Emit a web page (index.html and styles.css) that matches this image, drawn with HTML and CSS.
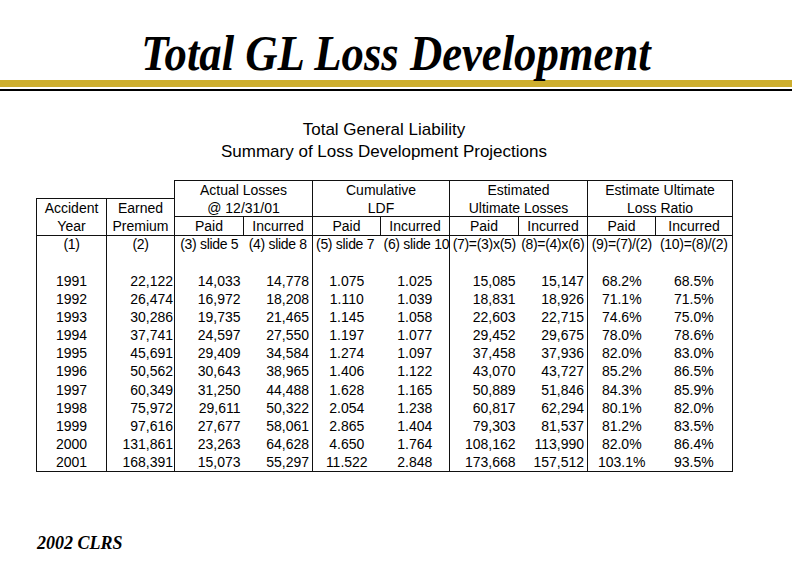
FILE: index.html
```html
<!DOCTYPE html>
<html lang="en">
<head>
<meta charset="utf-8">
<title>Total GL Loss Development</title>
<link rel="stylesheet" href="styles.css">
</head>
<body>
<div class="slide">
  <header class="head">
    <h1 class="title">Total GL Loss Development</h1>
    <div class="rule-gold"></div>
    <div class="rule-black"></div>
  </header>

  <section class="sheet">
    <p class="caption">Total General Liability<br>Summary of Loss Development Projections</p>
    <table class="grid">
      <colgroup>
        <col class="c70"><col class="c68"><col class="c69"><col class="c69"><col class="c68">
        <col class="c69"><col class="c69"><col class="c69"><col class="c68"><col class="c77">
      </colgroup>
      <thead>
        <tr>
          <td colspan="2" class="blank"></td>
          <td colspan="2" class="bt bl">Actual Losses</td>
          <td colspan="2" class="bt bl">Cumulative</td>
          <td colspan="2" class="bt bl">Estimated</td>
          <td colspan="2" class="bt bl br">Estimate Ultimate</td>
        </tr>
        <tr>
          <td class="bt bl">Accident</td>
          <td class="bt bl">Earned</td>
          <td colspan="2" class="bl bb">@ 12/31/01</td>
          <td colspan="2" class="bl bb">LDF</td>
          <td colspan="2" class="bl bb">Ultimate Losses</td>
          <td colspan="2" class="bl bb br">Loss Ratio</td>
        </tr>
        <tr>
          <td class="bl bb">Year</td>
          <td class="bl bb">Premium</td>
          <td class="bl bb">Paid</td>
          <td class="bl bb">Incurred</td>
          <td class="bl bb">Paid</td>
          <td class="bl bb">Incurred</td>
          <td class="bl bb">Paid</td>
          <td class="bl bb">Incurred</td>
          <td class="bl bb">Paid</td>
          <td class="bl bb br">Incurred</td>
        </tr>
      </thead>
      <tbody>
        <tr class="refs">
          <td>(1)</td><td>(2)</td><td>(3) slide 5</td><td>(4) slide 8</td><td class="tight">(5) slide 7</td>
          <td class="tight">(6) slide 10</td><td>(7)=(3)x(5)</td><td>(8)=(4)x(6)</td><td>(9)=(7)/(2)</td><td>(10)=(8)/(2)</td>
        </tr>
        <tr class="gap">
          <td></td><td></td><td></td><td></td><td></td><td></td><td></td><td></td><td></td><td></td>
        </tr>
        <tr><td>1991</td><td>22,122</td><td>14,033</td><td>14,778</td><td>1.075</td><td>1.025</td><td>15,085</td><td>15,147</td><td>68.2%</td><td>68.5%</td></tr>
        <tr><td>1992</td><td>26,474</td><td>16,972</td><td>18,208</td><td>1.110</td><td>1.039</td><td>18,831</td><td>18,926</td><td>71.1%</td><td>71.5%</td></tr>
        <tr><td>1993</td><td>30,286</td><td>19,735</td><td>21,465</td><td>1.145</td><td>1.058</td><td>22,603</td><td>22,715</td><td>74.6%</td><td>75.0%</td></tr>
        <tr><td>1994</td><td>37,741</td><td>24,597</td><td>27,550</td><td>1.197</td><td>1.077</td><td>29,452</td><td>29,675</td><td>78.0%</td><td>78.6%</td></tr>
        <tr><td>1995</td><td>45,691</td><td>29,409</td><td>34,584</td><td>1.274</td><td>1.097</td><td>37,458</td><td>37,936</td><td>82.0%</td><td>83.0%</td></tr>
        <tr><td>1996</td><td>50,562</td><td>30,643</td><td>38,965</td><td>1.406</td><td>1.122</td><td>43,070</td><td>43,727</td><td>85.2%</td><td>86.5%</td></tr>
        <tr><td>1997</td><td>60,349</td><td>31,250</td><td>44,488</td><td>1.628</td><td>1.165</td><td>50,889</td><td>51,846</td><td>84.3%</td><td>85.9%</td></tr>
        <tr><td>1998</td><td>75,972</td><td>29,611</td><td>50,322</td><td>2.054</td><td>1.238</td><td>60,817</td><td>62,294</td><td>80.1%</td><td>82.0%</td></tr>
        <tr><td>1999</td><td>97,616</td><td>27,677</td><td>58,061</td><td>2.865</td><td>1.404</td><td>79,303</td><td>81,537</td><td>81.2%</td><td>83.5%</td></tr>
        <tr><td>2000</td><td>131,861</td><td>23,263</td><td>64,628</td><td>4.650</td><td>1.764</td><td>108,162</td><td>113,990</td><td>82.0%</td><td>86.4%</td></tr>
        <tr><td>2001</td><td>168,391</td><td>15,073</td><td>55,297</td><td>11.522</td><td>2.848</td><td>173,668</td><td>157,512</td><td>103.1%</td><td>93.5%</td></tr>
      </tbody>
    </table>
  </section>

  <footer class="foot">2002 CLRS</footer>
</div>
</body>
</html>
```

FILE: styles.css
```css
html, body {
  margin: 0;
  padding: 0;
  background: #ffffff;
}

.slide {
  width: 792px;
  height: 576px;
  overflow: hidden;
  background: #ffffff;
}

/* ---------- slide heading ---------- */
.head {
  padding-top: 28px;
}

.title {
  margin: 0;
  height: 50px;
  line-height: 50px;
  font-family: "Liberation Serif", "Times New Roman", serif;
  font-style: italic;
  font-weight: bold;
  font-size: 44.7px;
  color: #000000;
  text-align: center;
  transform: scaleY(1.12);
}

.rule-gold {
  margin-top: 2px;
  height: 7px;
  background: #cdae2e;
}

.rule-black {
  margin-top: 2px;
  height: 2px;
  background: #000000;
}

/* ---------- spreadsheet block ---------- */
.sheet {
  width: 696px;
  margin: 28px 0 0 36px;
}

.caption {
  margin: 0;
  font-family: "Liberation Sans", Arial, sans-serif;
  font-size: 17px;
  line-height: 22px;
  color: #000000;
  text-align: center;
}

.grid {
  margin-top: 17px;
  border-collapse: collapse;
  table-layout: fixed;
  width: 696px;
  font-family: "Liberation Sans", Arial, sans-serif;
  font-size: 14px;
  color: #000000;
}

.c68 { width: 68px; }
.c69 { width: 69px; }
.c70 { width: 70px; }
.c77 { width: 77px; }

.grid tr {
  height: 18.2px;
}

.grid td {
  padding: 0 3px;
  line-height: 16px;
  white-space: nowrap;
  overflow: hidden;
  text-align: center;
  vertical-align: middle;
}

.bt { border-top: 1px solid #111111; }
.bb { border-bottom: 1px solid #111111; }
.bl { border-left: 1px solid #111111; }
.br { border-right: 1px solid #111111; }

/* group rules running through the body */
.grid tbody td:nth-child(1),
.grid tbody td:nth-child(2),
.grid tbody td:nth-child(3),
.grid tbody td:nth-child(5),
.grid tbody td:nth-child(7),
.grid tbody td:nth-child(9) {
  border-left: 1px solid #111111;
}

.grid tbody td:nth-child(10) {
  border-right: 1px solid #111111;
}

.grid tbody tr:last-child td {
  border-bottom: 1px solid #111111;
}

/* number alignment */
.grid tbody td:nth-child(2),
.grid tbody td:nth-child(3),
.grid tbody td:nth-child(4),
.grid tbody td:nth-child(7),
.grid tbody td:nth-child(8) {
  text-align: right;
}

.grid tbody td:nth-child(2) {
  padding-right: 1px;
}

.grid tbody tr.refs td {
  text-align: center;
  padding: 0 1px;
  letter-spacing: -0.3px;
}

.grid tbody tr.refs td.tight {
  text-align: left;
  padding-left: 3px;
}

/* ---------- footer ---------- */
.foot {
  margin: 61px 0 0 37px;
  font-family: "Liberation Serif", "Times New Roman", serif;
  font-style: italic;
  font-weight: bold;
  font-size: 18px;
  line-height: 20px;
  color: #000000;
}
```
